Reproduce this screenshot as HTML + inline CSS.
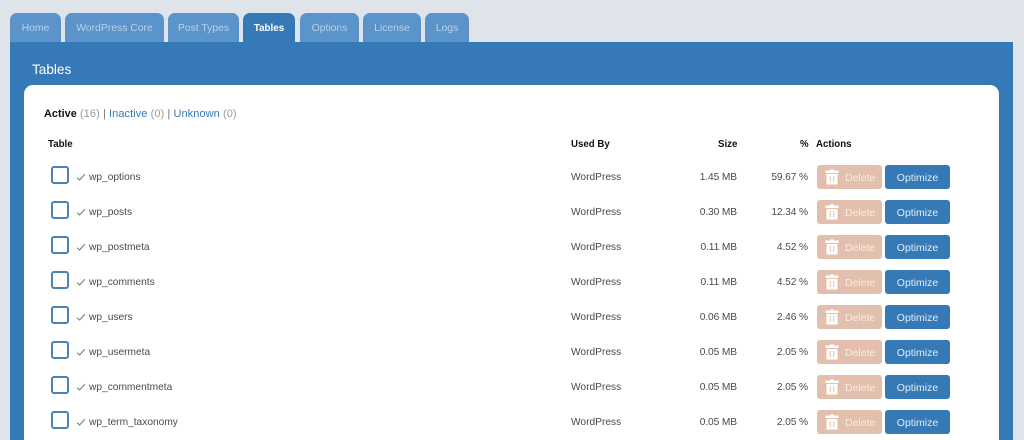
<!DOCTYPE html>
<html><head><meta charset="utf-8">
<style>
html,body{margin:0;padding:0;width:1024px;height:440px;overflow:hidden;background:#dfe4eb;font-family:"Liberation Sans",sans-serif;}
.a{position:absolute;white-space:nowrap}
.tab{position:absolute;top:13px;height:29px;background:#5b93cb;border-radius:7px 7px 0 0;color:#b9d2ea;font-size:10.4px;line-height:31px;text-align:center}
.tab.on{background:#3579b6;color:#fff;font-weight:bold;font-size:9.8px}
#panel{position:absolute;left:10px;top:42px;width:1003px;height:398px;background:#3579b6}
#card{position:absolute;left:24px;top:85px;width:975px;height:355px;background:#fff;border-radius:9px 9px 0 0}
.t{position:absolute;font-size:10.2px;line-height:14px;color:#4a4a4a;white-space:nowrap}
.h{font-weight:bold;color:#111;font-size:9.7px}
.cb{position:absolute;left:51px;width:14px;height:14px;border:2px solid #4a82b8;border-radius:3px;background:#fff}
.del{position:absolute;left:817px;width:65px;height:24px;background:#e3bfae;border-radius:3px;color:#f6ebe5;font-size:10.5px;line-height:26px;text-indent:28px}
.opt{position:absolute;left:885px;width:65px;height:24px;background:#3579b6;border-radius:3px;color:#e4eef7;font-size:10.5px;line-height:26px;text-align:center}
svg{position:absolute}
</style></head><body>
<div class="tab" style="left:10px;width:51px">Home</div>
<div class="tab" style="left:65px;width:99px">WordPress Core</div>
<div class="tab" style="left:168px;width:71px">Post Types</div>
<div class="tab on" style="left:243px;width:52px">Tables</div>
<div class="tab" style="left:300px;width:59px">Options</div>
<div class="tab" style="left:363px;width:58px">License</div>
<div class="tab" style="left:425px;width:44px">Logs</div>
<div id="panel"></div>
<div class="a" style="left:32px;top:61px;font-size:13.6px;line-height:18px;color:#fff">Tables</div>
<div id="card"></div>
<div class="t" style="left:44px;top:107px;font-size:11px;letter-spacing:.07px;color:#999"><b style="color:#111;font-size:10.8px">Active</b> (16) <span style="color:#777">|</span> <span style="color:#3579b6">Inactive</span> (0) <span style="color:#777">|</span> <span style="color:#3579b6">Unknown</span> (0)</div>
<div class="t h" style="left:48px;top:138px">Table</div>
<div class="t h" style="left:571px;top:138px">Used By</div>
<div class="t h" style="left:718px;top:138px">Size</div>
<div class="t h" style="left:800px;top:138px">%</div>
<div class="t h" style="left:816px;top:138px">Actions</div>
<script>
var rows=[["wp_options","1.45 MB","59.67 %"],["wp_posts","0.30 MB","12.34 %"],["wp_postmeta","0.11 MB","4.52 %"],["wp_comments","0.11 MB","4.52 %"],["wp_users","0.06 MB","2.46 %"],["wp_usermeta","0.05 MB","2.05 %"],["wp_commentmeta","0.05 MB","2.05 %"],["wp_term_taxonomy","0.05 MB","2.05 %"]];
var s="";
rows.forEach(function(r,i){var y=35*i;
s+='<div class="cb" style="top:'+(166+y)+'px"></div>';
s+='<svg style="left:76px;top:'+(173+y)+'px" width="10" height="9" viewBox="0 0 10 9"><path d="M1.2 4.8L3.6 7L8.8 1.2" fill="none" stroke="#5c9357" stroke-width="1.1"/></svg>';
s+='<div class="t" style="left:89px;top:'+(171+y)+'px">'+r[0]+'</div>';
s+='<div class="t" style="left:571px;top:'+(171+y)+'px">WordPress</div>';
s+='<div class="t" style="right:287px;top:'+(171+y)+'px;letter-spacing:-.1px">'+r[1]+'</div>';
s+='<div class="t" style="right:216px;top:'+(171+y)+'px;letter-spacing:-.1px">'+r[2]+'</div>';
s+='<div class="del" style="top:'+(165+y)+'px">Delete</div>';
s+='<svg style="left:825px;top:'+(169+y)+'px" width="14" height="16" viewBox="0 0 14 16"><path d="M0.5 1.5H5V0.5H9V1.5H13.5V4H0.5Z M1.5 5H12.5V15.5H1.5Z" fill="#fff"/><path d="M5.3 7V13M8.7 7V13" stroke="#e3bfae" stroke-width="1"/></svg>';
s+='<div class="opt" style="top:'+(165+y)+'px">Optimize</div>';
});
document.write(s);
</script>
</body></html>
